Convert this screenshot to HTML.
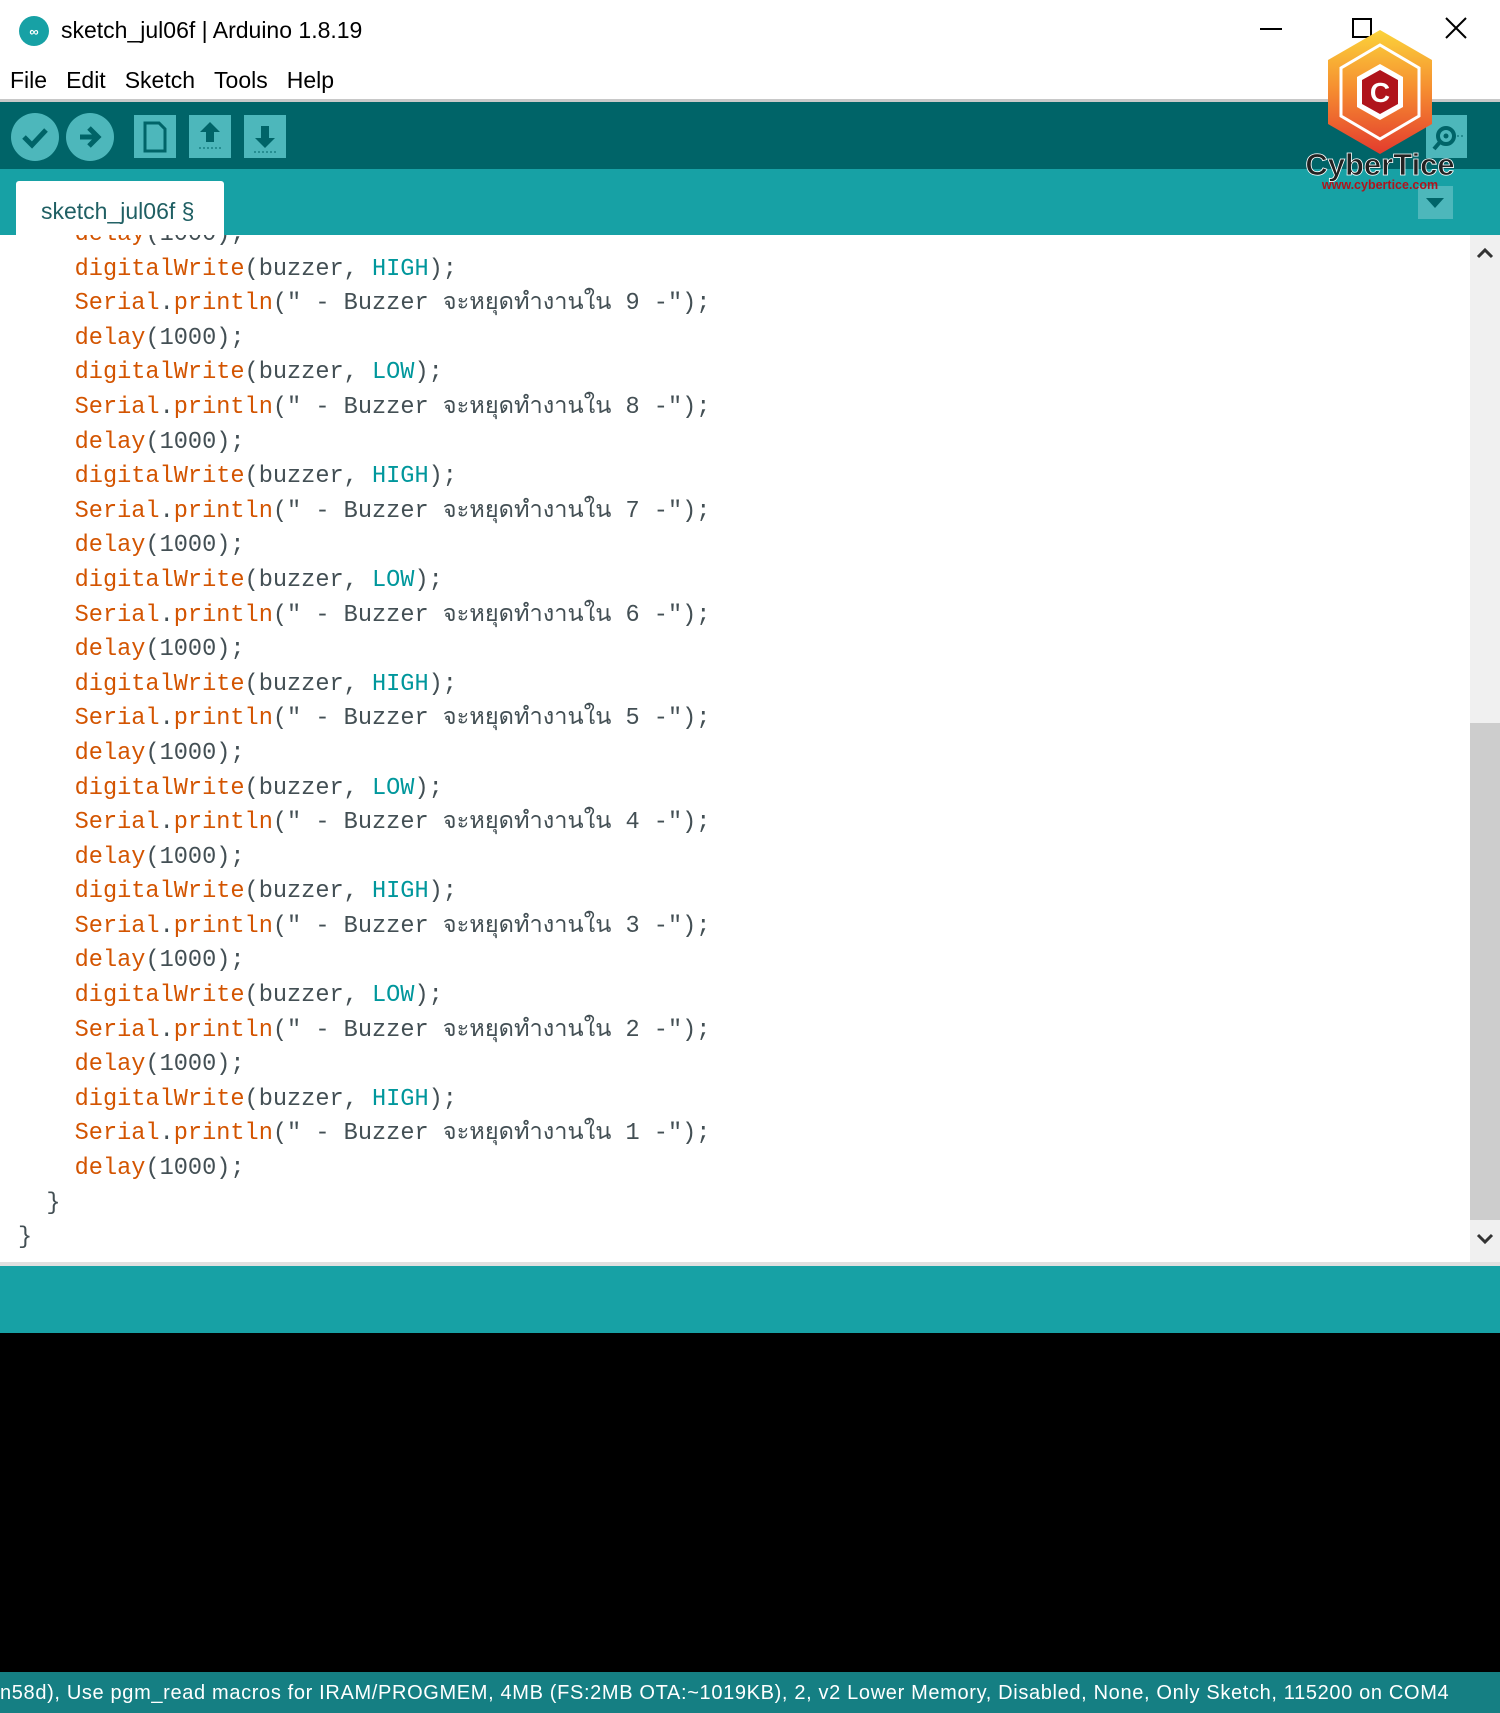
<!DOCTYPE html>
<html><head><meta charset="utf-8"><style>
*{margin:0;padding:0;box-sizing:border-box}
body{width:1500px;height:1713px;position:relative;overflow:hidden;background:#fff;font-family:"Liberation Sans",sans-serif}
.abs{position:absolute}
#title{left:0;top:0;width:1500px;height:58px;background:#fff}
#menu{top:67px;left:10px;font-size:23px;color:#000}
#menu span{margin-right:19px}
#line{left:0;top:99px;width:1500px;height:3px;background:#c8c8c8}
#tool{left:0;top:102px;width:1500px;height:67px;background:#006468}
#tabs{left:0;top:169px;width:1500px;height:66px;background:#17a1a5}
#tab{left:16px;top:181px;width:208px;height:56px;background:#fff;border-radius:3px 3px 0 0;color:#1f5f63;font-size:23px;padding:17px 0 0 25px}
.btn{background:#4db7bb}
#ed{left:0;top:235px;width:1470px;height:1027px;overflow:hidden;background:#fff}
#code{position:absolute;left:18px;top:-17px;font-family:"Liberation Mono",monospace;font-size:23.6px;line-height:34.6px;color:#434f54;white-space:pre}
.k{color:#d35400}.c{color:#00979c}
#sb{left:1470px;top:235px;width:30px;height:1027px;background:#f0f0f0}
#thumb{left:1470px;top:723px;width:30px;height:497px;background:#cdcdcd}
#bar{left:0;top:1262px;width:1500px;height:71px;background:#17a1a5;border-top:4px solid #e0e0e0}
#con{left:0;top:1333px;width:1500px;height:339px;background:#000}
#st{left:0;top:1672px;width:1500px;height:41px;background:#157f83;color:#fff;font-size:20px;padding-top:10px;white-space:nowrap;letter-spacing:0.65px}
</style></head><body>
<div id="title" class="abs"></div>
<svg class="abs" style="left:18px;top:15px" width="32" height="32"><circle cx="16" cy="16" r="15" fill="#17a1a5"/><text x="16" y="21" font-size="13" fill="#fff" text-anchor="middle" font-family="Liberation Sans" font-weight="bold">∞</text></svg>
<div class="abs" style="left:61px;top:17px;font-size:23px;color:#000">sketch_jul06f | Arduino 1.8.19</div>
<div class="abs" style="left:1260px;top:28px;width:22px;height:2px;background:#000"></div>
<div class="abs" style="left:1352px;top:18px;width:20px;height:20px;border:2px solid #000"></div>
<svg class="abs" style="left:1444px;top:16px" width="24" height="24"><path d="M2 2L22 22M22 2L2 22" stroke="#000" stroke-width="2"/></svg>
<div id="menu" class="abs"><span>File</span><span>Edit</span><span>Sketch</span><span>Tools</span><span>Help</span></div>
<div id="line" class="abs"></div>
<div id="tool" class="abs"></div>
<svg class="abs" style="left:0;top:102px" width="320" height="67">
<circle cx="35" cy="35" r="24" fill="#4db7bb"/><path d="M24 35l8 8 14-15" stroke="#006468" stroke-width="5" fill="none"/>
<circle cx="90" cy="35" r="24" fill="#4db7bb"/><path d="M80 35h16M89 26l9 9-9 9" stroke="#006468" stroke-width="5" fill="none"/>
<rect x="134" y="13" width="42" height="43" fill="#4db7bb"/><path d="M145 21h14l6 6v22h-20z" fill="none" stroke="#006468" stroke-width="3"/>
<rect x="189" y="13" width="42" height="43" fill="#4db7bb"/><path d="M210 20l-10 10h6v10h8v-10h6z" fill="#006468"/><path d="M199 46h22" stroke="#006468" stroke-dasharray="2 2"/>
<rect x="244" y="13" width="42" height="43" fill="#4db7bb"/><path d="M265 46l-10-10h6v-12h8v12h6z" fill="#006468"/><path d="M254 50h22" stroke="#006468" stroke-dasharray="2 2"/>
</svg>
<div class="abs btn" style="left:1426px;top:115px;width:41px;height:43px"></div>
<svg class="abs" style="left:1426px;top:115px" width="41" height="43"><circle cx="20" cy="21" r="8" fill="none" stroke="#006468" stroke-width="4"/><circle cx="20" cy="21" r="2.5" fill="#006468"/><path d="M14 27l-6 7" stroke="#006468" stroke-width="4"/><path d="M31 21h6" stroke="#006468" stroke-dasharray="2 2"/></svg>
<div id="tabs" class="abs"></div>
<div id="tab" class="abs">sketch_jul06f §</div>
<div class="abs btn" style="left:1418px;top:186px;width:35px;height:33px"></div>
<svg class="abs" style="left:1424px;top:196px" width="22" height="14"><path d="M2 2h18l-9 10z" fill="#006468"/></svg>
<svg class="abs" style="left:1300px;top:28px" width="160" height="168">
<defs><linearGradient id="g" x1="0" y1="0" x2="0" y2="1"><stop offset="0" stop-color="#fbd33a"/><stop offset=".5" stop-color="#f58a30"/><stop offset="1" stop-color="#e33b2e"/></linearGradient></defs>
<path d="M80 2L132 32V96L80 126L28 96V32Z" fill="url(#g)"/>
<path d="M80 17L119 40V88L80 111L41 88V40Z" fill="none" stroke="#fff" stroke-width="3"/>
<path d="M80 36L103 49V79L80 92L57 79V49Z" fill="#fff"/>
<path d="M80 42L98 52V76L80 86L62 76V52Z" fill="#b0141c"/>
<text x="80" y="74" font-size="28" font-weight="bold" fill="#fff" text-anchor="middle" font-family="Liberation Sans">C</text>
<text x="80" y="147" font-size="31" font-weight="bold" fill="#222" text-anchor="middle" font-family="Liberation Sans" stroke="#fff" stroke-width=".8">CyberTice</text>
<text x="80" y="161" font-size="12.5" font-weight="bold" fill="#b0141c" text-anchor="middle" font-family="Liberation Sans">www.cybertice.com</text>
</svg>
<div id="ed" class="abs"><div id="code">    <span class="k">delay</span>(1000);
    <span class="k">digitalWrite</span>(buzzer, <span class="c">HIGH</span>);
    <span class="k">Serial</span>.<span class="k">println</span>(" - Buzzer จะหยุดทำงานใน 9 -");
    <span class="k">delay</span>(1000);
    <span class="k">digitalWrite</span>(buzzer, <span class="c">LOW</span>);
    <span class="k">Serial</span>.<span class="k">println</span>(" - Buzzer จะหยุดทำงานใน 8 -");
    <span class="k">delay</span>(1000);
    <span class="k">digitalWrite</span>(buzzer, <span class="c">HIGH</span>);
    <span class="k">Serial</span>.<span class="k">println</span>(" - Buzzer จะหยุดทำงานใน 7 -");
    <span class="k">delay</span>(1000);
    <span class="k">digitalWrite</span>(buzzer, <span class="c">LOW</span>);
    <span class="k">Serial</span>.<span class="k">println</span>(" - Buzzer จะหยุดทำงานใน 6 -");
    <span class="k">delay</span>(1000);
    <span class="k">digitalWrite</span>(buzzer, <span class="c">HIGH</span>);
    <span class="k">Serial</span>.<span class="k">println</span>(" - Buzzer จะหยุดทำงานใน 5 -");
    <span class="k">delay</span>(1000);
    <span class="k">digitalWrite</span>(buzzer, <span class="c">LOW</span>);
    <span class="k">Serial</span>.<span class="k">println</span>(" - Buzzer จะหยุดทำงานใน 4 -");
    <span class="k">delay</span>(1000);
    <span class="k">digitalWrite</span>(buzzer, <span class="c">HIGH</span>);
    <span class="k">Serial</span>.<span class="k">println</span>(" - Buzzer จะหยุดทำงานใน 3 -");
    <span class="k">delay</span>(1000);
    <span class="k">digitalWrite</span>(buzzer, <span class="c">LOW</span>);
    <span class="k">Serial</span>.<span class="k">println</span>(" - Buzzer จะหยุดทำงานใน 2 -");
    <span class="k">delay</span>(1000);
    <span class="k">digitalWrite</span>(buzzer, <span class="c">HIGH</span>);
    <span class="k">Serial</span>.<span class="k">println</span>(" - Buzzer จะหยุดทำงานใน 1 -");
    <span class="k">delay</span>(1000);
  }
}</div></div>
<div id="sb" class="abs"></div>
<div id="thumb" class="abs"></div>
<svg class="abs" style="left:1476px;top:246px" width="18" height="14"><path d="M2 11l7-7 7 7" stroke="#333" stroke-width="3" fill="none"/></svg>
<svg class="abs" style="left:1476px;top:1232px" width="18" height="14"><path d="M2 3l7 7 7-7" stroke="#333" stroke-width="3" fill="none"/></svg>
<div id="bar" class="abs"></div>
<div id="con" class="abs"></div>
<div id="st" class="abs">n58d), Use pgm_read macros for IRAM/PROGMEM, 4MB (FS:2MB OTA:~1019KB), 2, v2 Lower Memory, Disabled, None, Only Sketch, 115200 on COM4</div>
</body></html>
